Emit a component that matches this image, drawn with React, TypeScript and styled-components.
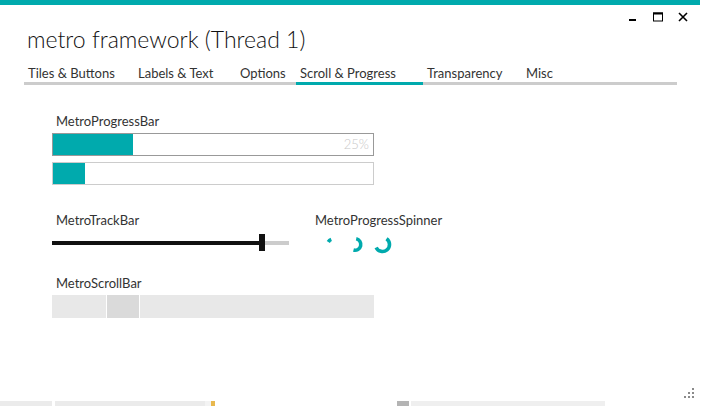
import styled, { createGlobalStyle } from "styled-components";

const teal = "#00aaad";

const GlobalStyle = createGlobalStyle`
  html, body {
    margin: 0;
    padding: 0;
    background: #ffffff;
  }
  body {
    font-family: Lato, "Open Sans", "Liberation Sans", sans-serif;
    color: #1a1a1a;
  }
`;

const Screen = styled.div`
  width: 702px;
  height: 406px;
  display: flex;
  flex-direction: column;
  overflow: hidden;
`;

const Window = styled.div`
  width: 700px;
  height: 401px;
  box-sizing: border-box;
  border-top: 5px solid ${teal};
  display: flex;
  flex-direction: column;
`;

const ControlBox = styled.div`
  display: flex;
  justify-content: flex-end;
  gap: 15px;
  padding: 7px 12px 0 0;
  height: 10px;
`;

const ControlButton = styled.svg`
  width: 10px;
  height: 10px;
  display: block;
`;

const Title = styled.h1`
  margin: 1px 0 0 27px;
  font-size: 23px;
  line-height: 32px;
  font-weight: 300;
  color: #111;
`;

const TabList = styled.div`
  display: flex;
  margin: 10px 0 0 24px;
  width: 653px;
  border-bottom: 3px solid #cccccc;
`;

const Tab = styled.div<{ $w: number; $active?: boolean }>`
  width: ${(p) => p.$w}px;
  box-sizing: border-box;
  padding-left: 4px;
  font-size: 13px;
  line-height: 17px;
  color: #333;
  white-space: nowrap;
  margin-bottom: -3px;
  border-bottom: 3px solid ${(p) => (p.$active ? teal : "transparent")};
`;

const Content = styled.div`
  margin: 28px 0 0 52px;
  display: flex;
  flex-direction: column;
`;

const Label = styled.div`
  padding-left: 4px;
  font-size: 13px;
  line-height: 16px;
  color: #333;
  white-space: nowrap;
`;

const Bars = styled.div`
  margin-top: 4px;
  display: flex;
  flex-direction: column;
  gap: 6px;
`;

const ProgressBar = styled.div<{ $strong?: boolean }>`
  width: 322px;
  height: 23px;
  box-sizing: border-box;
  border: 1px solid ${(p) => (p.$strong ? "#999999" : "#cccccc")};
  display: flex;
  align-items: center;
  position: relative;
`;

const Fill = styled.div`
  height: 100%;
  background: ${teal};
`;

const Percent = styled.span`
  position: absolute;
  right: 4px;
  top: 0;
  line-height: 21px;
  font-size: 13px;
  font-weight: 300;
  color: #c8c8c8;
`;

const Row = styled.div`
  margin-top: 27px;
  display: flex;
  gap: 22px;
`;

const Column = styled.div<{ $w?: number }>`
  display: flex;
  flex-direction: column;
  width: ${(p) => (p.$w ? `${p.$w}px` : "auto")};
`;

const Track = styled.div`
  margin-top: 6px;
  height: 17px;
  display: flex;
  align-items: center;
`;

const TrackDone = styled.div`
  width: 207px;
  height: 4px;
  background: #111;
`;

const Thumb = styled.div`
  width: 6px;
  height: 17px;
  background: #111;
`;

const TrackLeft = styled.div`
  width: 24px;
  height: 4px;
  background: #cccccc;
`;

const Spinners = styled.svg`
  margin-top: 4px;
  margin-left: 9px;
  width: 80px;
  height: 24px;
  display: block;
`;

const ScrollSection = styled.div`
  margin-top: 19px;
  display: flex;
  flex-direction: column;
`;

const ScrollBar = styled.div`
  margin-top: 4px;
  width: 322px;
  height: 23px;
  display: flex;
  background: #e8e8e8;
`;

const ScrollThumb = styled.div<{ $offset: number }>`
  margin-left: ${(p) => p.$offset}px;
  width: 32px;
  height: 100%;
  background: #dadada;
  border-left: 1px solid #fff;
  border-right: 1px solid #fff;
`;

const Footer = styled.div`
  margin-top: auto;
  display: flex;
  justify-content: flex-end;
  padding: 0 4px 3px 0;
`;

const Taskbar = styled.div`
  height: 5px;
  display: flex;
  align-items: stretch;
`;

const Strip = styled.div<{ $w: number; $c: string; $ml?: number }>`
  width: ${(p) => p.$w}px;
  margin-left: ${(p) => p.$ml ?? 0}px;
  background: ${(p) => p.$c};
`;

const arc = (cx: number, cy: number, r: number, a0: number, a1: number) => {
  const rad = (a: number) => (a * Math.PI) / 180;
  const x0 = cx + r * Math.cos(rad(a0));
  const y0 = cy + r * Math.sin(rad(a0));
  const x1 = cx + r * Math.cos(rad(a1));
  const y1 = cy + r * Math.sin(rad(a1));
  const large = a1 - a0 > 180 ? 1 : 0;
  return `M${x0} ${y0} A${r} ${r} 0 ${large} 1 ${x1} ${y1}`;
};

const tabs = [
  { name: "Tiles & Buttons", w: 110 },
  { name: "Labels & Text", w: 102 },
  { name: "Options", w: 60 },
  { name: "Scroll & Progress", w: 127, active: true },
  { name: "Transparency", w: 99 },
  { name: "Misc", w: 60 },
];

export default function App() {
  return (
    <Screen>
      <GlobalStyle />
      <Window>
        <ControlBox>
          <ControlButton viewBox="0 0 10 10">
            <rect x="1" y="7" width="7" height="2" fill="#000" />
          </ControlButton>
          <ControlButton viewBox="0 0 10 10">
            <rect x="0.5" y="1" width="9" height="8" fill="none" stroke="#000" strokeWidth="1" />
            <rect x="0" y="0.5" width="10" height="2" fill="#000" />
          </ControlButton>
          <ControlButton viewBox="0 0 10 10">
            <path d="M1 1 L9 9 M9 1 L1 9" stroke="#000" strokeWidth="1.6" />
          </ControlButton>
        </ControlBox>
        <Title>metro framework (Thread 1)</Title>
        <TabList>
          {tabs.map((t) => (
            <Tab key={t.name} $w={t.w} $active={t.active}>
              {t.name}
            </Tab>
          ))}
        </TabList>
        <Content>
          <Label>MetroProgressBar</Label>
          <Bars>
            <ProgressBar $strong>
              <Fill style={{ width: "25%" }} />
              <Percent>25%</Percent>
            </ProgressBar>
            <ProgressBar>
              <Fill style={{ width: "10%" }} />
            </ProgressBar>
          </Bars>
          <Row>
            <Column $w={237}>
              <Label>MetroTrackBar</Label>
              <Track>
                <TrackDone />
                <Thumb />
                <TrackLeft />
              </Track>
            </Column>
            <Column>
              <Label>MetroProgressSpinner</Label>
              <Spinners viewBox="0 0 80 24">
                <g fill="none" stroke={teal} strokeWidth="3.6">
                  <path d={arc(13.5, 13, 6, -150, -112)} />
                  <path d={arc(35, 12.5, 5.8, -78, 105)} />
                  <path d={arc(62.5, 12.5, 7, -55, 155)} />
                </g>
              </Spinners>
            </Column>
          </Row>
          <ScrollSection>
            <Label>MetroScrollBar</Label>
            <ScrollBar>
              <ScrollThumb $offset={54} />
            </ScrollBar>
          </ScrollSection>
        </Content>
        <Footer>
          <svg width="12" height="10" viewBox="0 0 12 10">
            <g fill="#8a8a8a">
              <rect x="8" y="0" width="2" height="2" />
              <rect x="4" y="4" width="2" height="2" />
              <rect x="8" y="4" width="2" height="2" />
              <rect x="0" y="8" width="2" height="2" />
              <rect x="4" y="8" width="2" height="2" />
              <rect x="8" y="8" width="2" height="2" />
            </g>
          </svg>
        </Footer>
      </Window>
      <Taskbar>
        <Strip $w={52} $c="#ebebeb" />
        <Strip $w={150} $c="#ebebeb" $ml={3} />
        <Strip $w={6} $c="#f3f3f3" />
        <Strip $w={4} $c="#e8b84e" />
        <Strip $w={12} $c="#b4b4b4" $ml={182} />
        <Strip $w={194} $c="#efefef" $ml={2} />
      </Taskbar>
    </Screen>
  );
}
